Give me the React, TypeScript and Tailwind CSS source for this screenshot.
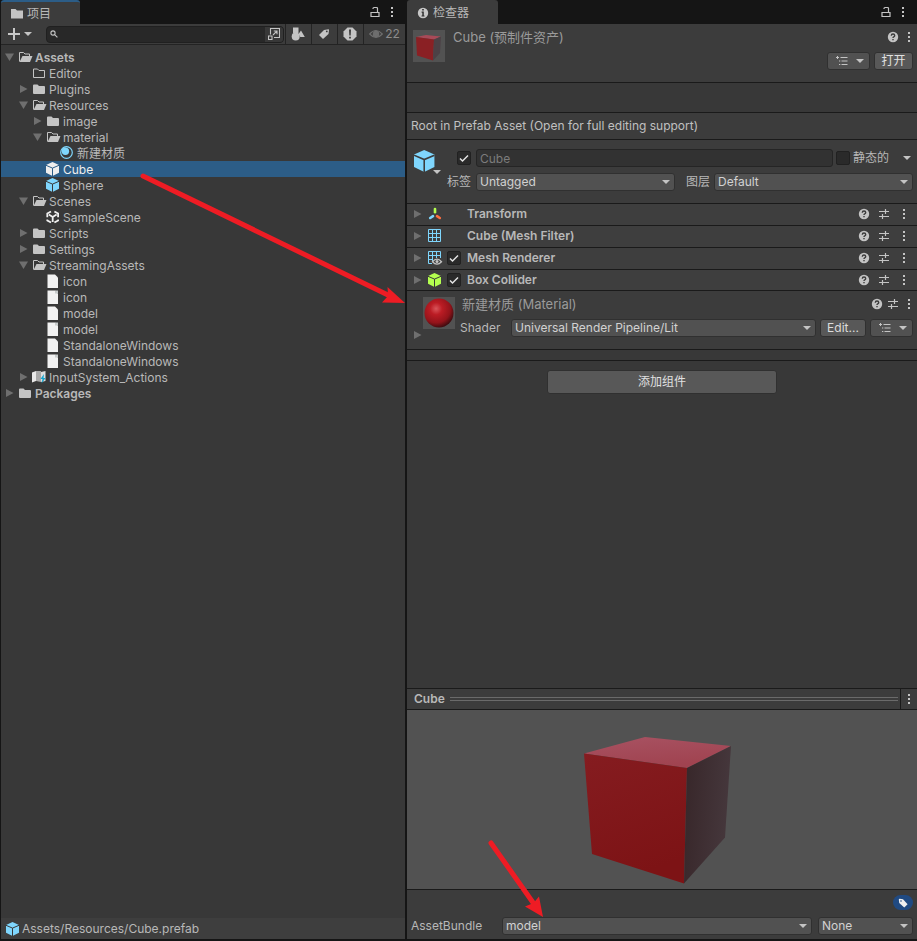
import type { ReactNode } from 'react';
import clsx from 'clsx';

type IconName = 'folder' | 'folderOpen' | 'folderEmpty' | 'material' | 'cube' | 'prefab' | 'scene' | 'file' | 'manifest' | 'input';

type TreeItem = {
  name: string;
  depth: number;
  icon: IconName;
  open?: boolean;
  selected?: boolean;
};

const tree: TreeItem[] = [
  { name: 'Assets', depth: 0, icon: 'folderOpen', open: true },
  { name: 'Editor', depth: 1, icon: 'folderEmpty' },
  { name: 'Plugins', depth: 1, icon: 'folder', open: false },
  { name: 'Resources', depth: 1, icon: 'folderOpen', open: true },
  { name: 'image', depth: 2, icon: 'folder', open: false },
  { name: 'material', depth: 2, icon: 'folderOpen', open: true },
  { name: '新建材质', depth: 3, icon: 'material' },
  { name: 'Cube', depth: 2, icon: 'cube', selected: true },
  { name: 'Sphere', depth: 2, icon: 'prefab' },
  { name: 'Scenes', depth: 1, icon: 'folderOpen', open: true },
  { name: 'SampleScene', depth: 2, icon: 'scene' },
  { name: 'Scripts', depth: 1, icon: 'folder', open: false },
  { name: 'Settings', depth: 1, icon: 'folder', open: false },
  { name: 'StreamingAssets', depth: 1, icon: 'folderOpen', open: true },
  { name: 'icon', depth: 2, icon: 'file' },
  { name: 'icon', depth: 2, icon: 'manifest' },
  { name: 'model', depth: 2, icon: 'file' },
  { name: 'model', depth: 2, icon: 'manifest' },
  { name: 'StandaloneWindows', depth: 2, icon: 'file' },
  { name: 'StandaloneWindows', depth: 2, icon: 'manifest' },
  { name: 'InputSystem_Actions', depth: 1, icon: 'input', open: false },
  { name: 'Packages', depth: 0, icon: 'folder', open: false },
];

function CubeIcon({ className, line = '#383838' }: { className?: string; line?: string }) {
  return (
    <svg viewBox="0 0 14 14" className={className}>
      <path d="M6.5 0 L13 2.9 V10.8 L6.5 14 L0 10.8 V2.9 Z" fill="currentColor" />
      <path d="M0 3.3 L6.5 6.1 L13 3.3 M6.5 6.1 V14" fill="none" stroke={line} strokeWidth="1" />
    </svg>
  );
}

function SceneIcon() {
  return (
    <svg viewBox="0 0 14 14" className="w-3.5 h-3.5" fill="none" stroke="#f0f0f0" strokeWidth="1.8">
      <path d="M5 1.4 L1.3 3.6 V7.2 M1.3 9.4 V10.4 L5 12.6 M8.4 12.6 L12.1 10.4 V9.4 M12.1 7.2 V3.6 L8.4 1.4" />
      <path d="M2.8 4.6 L6.7 7 L10.6 4.6 M6.7 7 V12" />
    </svg>
  );
}

function Foldout({ open }: { open: boolean }) {
  return (
    <svg viewBox="0 0 12 12" className="w-3 h-3 text-[#6f6f6f]">
      {open ? <path d="M1 2.5 H10 L5.5 10 Z" fill="currentColor" /> : <path d="M2 2 L9.5 6 L2 10 Z" fill="currentColor" />}
    </svg>
  );
}

function Caret({ className }: { className?: string }) {
  return (
    <svg viewBox="0 0 8 4" className={clsx('w-2 h-1 shrink-0 text-[#c4c4c4]', className)}>
      <path d="M0 0 H8 L4 4 Z" fill="currentColor" />
    </svg>
  );
}

function TreeIcon({ name }: { name: IconName }) {
  if (name === 'cube') return <CubeIcon className="w-3.5 h-3.5 text-[#eeeeee]" line="#2c5d87" />;
  if (name === 'prefab') return <CubeIcon className="w-3.5 h-3.5 text-[#7fd6fd]" />;
  if (name === 'scene') return <SceneIcon />;
  return (
    <svg viewBox="0 0 16 16" className="w-4 h-4 text-[#c4c4c4]">
      {name === 'folder' && <path d="M1 4.5 Q1 3.5 2 3.5 H5.5 L7 5 H12 Q13 5 13 6 V12 Q13 13 12 13 H2 Q1 13 1 12 Z" fill="currentColor" />}
      {name === 'folderEmpty' && <path d="M1.5 4 H5.5 L7 5.5 H12.5 V12.5 H1.5 Z" fill="none" stroke="currentColor" />}
      {name === 'folderOpen' && (
        <>
          <path d="M1.5 12.5 V3.5 H5.5 L7 5 H11.5 V7" fill="none" stroke="currentColor" />
          <path d="M4.5 7 H14.5 L12 13 H1.5 Z" fill="currentColor" />
        </>
      )}
      {name === 'material' && (
        <>
          <circle cx="6.5" cy="7.5" r="5.8" fill="none" stroke="#7fd6fd" strokeWidth="1.2" />
          <circle cx="5.4" cy="6.2" r="3.7" fill="#7fd6fd" />
        </>
      )}
      {(name === 'file' || name === 'manifest') && (
        <>
          <path d="M1.5 1.5 H9 L12 4.5 V15 H1.5 Z" fill="#f2f2f2" />
          {name === 'manifest' && <path d="M9 1.5 H12 V4.5 H9 Z" fill="#c8cccc" />}
        </>
      )}
      {name === 'input' && (
        <>
          <path d="M0 3.5 L4 2 V12 L0 13.5 Z" fill="#e8e8e8" />
          <path d="M4 2 H9 V13 L4 12 Z" fill="#a9a9a9" />
          <path d="M9 3 L13.5 2 V12 L9 13 Z" fill="#dedede" />
          <path d="M12 5 L8.5 10 H10.5 L9.5 14.5 L13.5 9 H11.5 Z" fill="#14a5cf" />
        </>
      )}
    </svg>
  );
}

function TreeRow({ item }: { item: TreeItem }) {
  const indent = 3 + item.depth * 14;
  return (
    <li className={clsx('flex items-center h-4', item.selected ? 'bg-[#2c5d87] text-[#eeeeee]' : '')} style={{ paddingLeft: indent }}>
      <button className="w-3.5 h-4 flex items-center shrink-0" aria-label={item.name} disabled={item.open === undefined}>
        {item.open !== undefined && <Foldout open={item.open} />}
      </button>
      <span className="w-4 h-4 flex items-center shrink-0">
        <TreeIcon name={item.icon} />
      </span>
      <span className={clsx('pl-px pt-0.5 whitespace-nowrap', item.depth === 0 && 'font-semibold')}>{item.name}</span>
    </li>
  );
}

function LockIcon() {
  return (
    <svg viewBox="0 0 10 12" className="w-2.5 h-3 text-[#c4c4c4]" fill="none" stroke="currentColor" strokeWidth="1.2">
      <path d="M1 6.5 H9 V10.5 H1 Z M7.5 6 V2.5 Q7.5 1.5 6.5 1.5 H4 Q3 1.5 3 2.5 V3" />
    </svg>
  );
}

function Kebab() {
  return (
    <svg viewBox="0 0 4 12" className="w-1 h-3 text-[#c4c4c4]">
      <path d="M1 1 H3 V3 H1 Z M1 5 H3 V7 H1 Z M1 9 H3 V11 H1 Z" fill="currentColor" />
    </svg>
  );
}

function HelpIcon() {
  return (
    <svg viewBox="0 0 12 12" className="w-3 h-3">
      <circle cx="6" cy="6" r="5.2" fill="#c4c4c4" />
      <path d="M4.3 4.7 Q4.3 3 6 3 Q7.7 3 7.7 4.5 Q7.7 5.4 6.7 5.8 Q6 6.1 6 7" fill="none" stroke="#3c3c3c" strokeWidth="1.4" />
      <path d="M5.3 8 H6.7 V9.3 H5.3 Z" fill="#3c3c3c" />
    </svg>
  );
}

function PresetIcon() {
  return (
    <svg viewBox="0 0 12 12" className="w-3 h-3 text-[#c4c4c4]" fill="none" stroke="currentColor" strokeWidth="1.2">
      <path d="M1 3.5 H7 M7.5 1 V6 M7.5 3.5 H11 M1 8.5 H4 M4.5 6 V11 M5 8.5 H11" />
    </svg>
  );
}

function HeaderIcons({ preset = false, className }: { preset?: boolean; className?: string }) {
  return (
    <div className={clsx('flex items-center shrink-0', className)}>
      <button aria-label="帮助"><HelpIcon /></button>
      {preset && <button aria-label="预设"><PresetIcon /></button>}
      <button aria-label="更多"><Kebab /></button>
    </div>
  );
}

function ListMenuButton() {
  return (
    <button aria-label="列表" className="h-[18px] w-[43px] shrink-0 flex items-center justify-between pl-2 pr-[5px] bg-[#515151] border border-[#303030] rounded-[3px]">
      <svg viewBox="0 0 12 10" className="w-3 h-2.5 text-[#c4c4c4]" fill="none" stroke="currentColor">
        <path d="M0 1.5 H3 M1.5 0 V3 M4.5 1.5 H11.5 M5.5 5 H11.5 M5.5 8.5 H11.5 M3 5 H4.3 M3 8.5 H4.3" />
      </svg>
      <Caret />
    </button>
  );
}

function Dropdown({ label, value, className }: { label: string; value: string; className?: string }) {
  return (
    <div className={clsx('relative flex items-center min-w-0', className)}>
      <select aria-label={label} defaultValue={value} className="appearance-none w-full h-[18px] pl-[3px] pr-4 leading-4 bg-[#515151] text-[#d2d2d2] border border-[#303030] rounded-[3px] outline-none">
        <option>{value}</option>
      </select>
      <Caret className="absolute right-[5px] pointer-events-none" />
    </div>
  );
}

function Checkbox({ label, checked = false }: { label: string; checked?: boolean }) {
  return (
    <span className="relative flex w-3.5 h-3.5 shrink-0">
      <input type="checkbox" aria-label={label} defaultChecked={checked} className="peer appearance-none w-3.5 h-3.5 bg-[#2a2a2a] border border-[#212121] rounded-[2px]" />
      <svg viewBox="0 0 14 14" className="absolute inset-0 hidden peer-checked:block pointer-events-none" fill="none" stroke="#e4e4e4" strokeWidth="1.5">
        <path d="M3 7.5 L5.5 10 L11 4.5" />
      </svg>
    </span>
  );
}

function TransformIcon() {
  return (
    <svg viewBox="0 0 14 14" className="w-3.5 h-3.5" fill="none" strokeWidth="2.6" strokeLinecap="round">
      <path d="M7 2 V5.2" stroke="#b4ff4f" />
      <path d="M5 9.2 L2.2 11" stroke="#7fd6fd" />
      <path d="M9 9.2 L11.8 11" stroke="#ff6e40" />
    </svg>
  );
}

function MeshIcon({ eye = false }: { eye?: boolean }) {
  return (
    <svg viewBox="0 0 14 14" className="w-3.5 h-3.5 overflow-visible" fill="none" stroke="#7fd6fd">
      {eye ? <path d="M4 12.5 H0.5 V0.5 H12.5 V7 M4.5 0.5 V10 M8.5 0.5 V7 M0.5 4.5 H12.5 M0.5 8.5 H5" /> : <path d="M0.5 0.5 H12.5 V12.5 H0.5 Z M4.5 0.5 V12.5 M8.5 0.5 V12.5 M0.5 4.5 H12.5 M0.5 8.5 H12.5" />}
      {eye && (
        <>
          <path d="M4.5 10.7 Q9 5.5 13.5 10.7 Q9 15.5 4.5 10.7 Z" stroke="#c4c4c4" strokeWidth="1.3" fill="#3c3c3c" />
          <circle cx="9" cy="10.6" r="1.5" fill="#c4c4c4" stroke="none" />
        </>
      )}
    </svg>
  );
}

function ComponentRow({ title, icon, toggle = false }: { title: string; icon: ReactNode; toggle?: boolean }) {
  return (
    <div className="h-[22px] last:h-[21px] flex items-center pl-[5px] pr-[11px] pb-px last:pb-0 bg-[#3e3e3e] border-b border-[#1a1a1a]">
      <button aria-label={title} className="w-4"><Foldout open={false} /></button>
      <span className="w-[19px]">{icon}</span>
      <span className="w-5">{toggle && <Checkbox label={title} checked />}</span>
      <h3 className="flex-1 font-semibold">{title}</h3>
      <HeaderIcons preset className="gap-2 [&>button:last-child]:ml-1" />
    </div>
  );
}

// annotation arrows, drawn over the panels
function Arrow({ className, viewBox, line, head }: { className: string; viewBox: string; line: string; head: string }) {
  return (
    <svg viewBox={viewBox} className={clsx('absolute pointer-events-none', className)}>
      <path d={line} stroke="#ee1c24" strokeWidth="5" strokeLinecap="round" />
      <path d={head} fill="#ee1c24" />
    </svg>
  );
}

function ProjectPanel() {
  return (
    <section className="flex flex-col min-w-0 bg-[#383838]">
      <div className="h-6 flex items-center bg-[#151515] pr-[11px]">
        <h2 className="h-6 w-[79px] flex items-center gap-0.5 pl-2 pt-0.5 bg-[#3c3c3c] border-t-2 border-[#2c5d87] rounded-t-[3px]">
          <svg viewBox="0 0 16 16" className="w-4 h-4 text-[#c4c4c4]">
            <path d="M2 3 H6.5 L8 4.5 H14 V12.5 H2 Z" fill="currentColor" />
          </svg>
          项目
        </h2>
        <div className="ml-auto flex items-center gap-2.5">
          <button aria-label="锁定"><LockIcon /></button>
          <button aria-label="更多"><Kebab /></button>
        </div>
      </div>
      <div className="h-[21px] flex items-center bg-[#3c3c3c] border-b border-[#232323]">
        <button aria-label="新建" className="w-[45px] flex items-center gap-1 pl-[7px]">
          <svg viewBox="0 0 12 12" className="w-3 h-3" stroke="#c8c8c8" strokeWidth="2">
            <path d="M6 0 V12 M0 6 H12" />
          </svg>
          <Caret />
        </button>
        <div className="flex-1 h-[17px] flex items-center min-w-0 bg-[#282828] border border-[#202020] rounded-[4px]">
          <svg viewBox="0 0 8 8" className="w-2 h-2 ml-[3px] shrink-0" fill="none" stroke="#c4c4c4" strokeWidth="1.1">
            <circle cx="3" cy="3" r="2.1" />
            <path d="M4.6 4.6 L7.4 7.4" />
          </svg>
          <input type="text" aria-label="搜索" className="flex-1 min-w-0 h-4 px-1 bg-transparent outline-none" />
          <button aria-label="搜索窗口" className="w-[18px] h-[15px] flex items-center justify-center bg-[#383838] rounded-r-[3px]">
            <svg viewBox="0 0 12 12" className="w-3 h-3" fill="none" stroke="#c4c4c4" strokeWidth="1.1">
              <path d="M2.5 6.5 V0.5 H11.5 V9.5 H6 M0.5 8 H4 V11.5 H0.5 Z M5 7 L8.8 3.2 M5.8 3 H9 V6.2" />
            </svg>
          </button>
        </div>
        <div className="ml-px h-5 flex shrink-0">
          <button aria-label="按类型搜索" className="w-[26px] flex items-center justify-center pr-0.5 border-l border-[#232323]">
            <svg viewBox="0 0 14 14" className="w-3.5 h-3.5 text-[#c4c4c4]" fill="currentColor">
              <path d="M2 0.5 H7.5 V6 H2 Z M10 3.5 L13.8 10 H9.3 L7.5 7 Z" />
              <circle cx="4.7" cy="9.5" r="4" />
            </svg>
          </button>
          <button aria-label="按标签搜索" className="w-[26px] flex items-center justify-center pr-0.5 border-l border-[#232323]">
            <svg viewBox="0 0 12 12" className="w-3 h-3">
              <path d="M6 2 L10.5 1.2 Q11 1.2 11 1.7 L10.5 6 L5 11 L1 7 Z" fill="#c4c4c4" />
              <circle cx="8.8" cy="3.4" r="0.9" fill="#3c3c3c" />
            </svg>
          </button>
          <button aria-label="错误" className="w-[26px] flex items-center justify-center pr-0.5 border-l border-[#232323]">
            <svg viewBox="0 0 14 14" className="w-3.5 h-3.5">
              <path d="M4.5 0.5 H9.5 L13.5 4.5 V9.5 L9.5 13.5 H4.5 L0.5 9.5 V4.5 Z" fill="#c4c4c4" />
              <path d="M6 2.5 H8 L7.7 8.5 H6.3 Z M6.1 9.8 H7.9 V11.5 H6.1 Z" fill="#3c3c3c" />
            </svg>
          </button>
          <button aria-label="隐藏的包" className="w-[42px] flex items-center justify-center gap-0.5 border-l border-[#232323] text-[#8c8c8c]">
            <svg viewBox="0 0 14 10" className="w-3.5 h-2.5" fill="none" stroke="#6e6e6e" strokeWidth="1.2">
              <path d="M0.7 5 Q7 -2 13.3 5 Q7 12 0.7 5 Z" />
              <circle cx="7" cy="5" r="2.7" fill="#6e6e6e" />
            </svg>
            22
          </button>
        </div>
      </div>
      <ul className="flex-1 pt-1">
        {tree.map((item, i) => <TreeRow key={i} item={item} />)}
      </ul>
      <footer className="h-[21px] flex items-center gap-0.5 pl-[5px] bg-[#3e3e3e]">
        <CubeIcon className="w-3.5 h-3.5 text-[#7fd6fd]" />
        <span>Assets/Resources/Cube.prefab</span>
      </footer>
    </section>
  );
}

function InspectorPanel() {
  return (
    <section className="flex flex-col min-w-0 bg-[#383838]">
      <div className="h-6 flex items-center bg-[#151515] pr-3">
        <h2 className="h-6 w-[91px] flex items-center gap-1 pl-2.5 pt-0.5 bg-[#3c3c3c] rounded-t-[3px]">
          <svg viewBox="0 0 12 12" className="w-3 h-3">
            <circle cx="6" cy="6" r="5.2" fill="#c8c8c8" />
            <path d="M5.2 2 H6.8 V3.6 H5.2 Z M4.6 4.6 H6.8 V8.4 H7.5 V9.6 H4.5 V8.4 H5.3 V5.7 H4.6 Z" fill="#303030" />
          </svg>
          检查器
        </h2>
        <div className="ml-auto flex items-center gap-2.5">
          <button aria-label="锁定"><LockIcon /></button>
          <button aria-label="更多"><Kebab /></button>
        </div>
      </div>

      <header className="h-[59px] flex pt-1.5 pl-1.5 bg-[#3c3c3c] border-b border-[#1a1a1a]">
        <svg viewBox="0 0 32 32" className="w-8 h-8 shrink-0 bg-[#525252]">
          <path d="M3 7 L13 5 L28 6.5 L21 9.5 Z" fill="#a84a58" />
          <path d="M3 7 L21 9.5 L20 30.5 L4 25.5 Z" fill="#8a2024" />
          <path d="M21 9.5 L28 6.5 L27 23 L20 30.5 Z" fill="#4c4146" />
        </svg>
        <div className="flex-1 flex flex-col pl-2">
          <div className="h-3.5 flex items-center justify-between pr-1.5">
            <h1 className="text-[13px] text-[#9a9a9a]">Cube (预制件资产)</h1>
            <HeaderIcons className="gap-2" />
          </div>
          <div className="mt-2 flex justify-end gap-1 pr-1">
            <ListMenuButton />
            <button className="h-[18px] w-[39px] bg-[#585858] border border-[#303030] rounded-[3px] leading-4 text-[#e0e0e0]">打开</button>
          </div>
        </div>
      </header>
      <div className="h-[30px] border-b border-[#1a1a1a]" />
      <p className="h-[27px] flex items-center pl-1 pb-px bg-[#3c3c3c] border-b border-[#1a1a1a] text-[#c0c0c0]">Root in Prefab Asset (Open for full editing support)</p>

      <div className="h-16 flex pt-[9px] pl-[7px] pr-1 bg-[#3c3c3c] border-b border-[#1a1a1a]">
        <button aria-label="图标" className="w-[33px] shrink-0 flex items-end self-start pt-px">
          <CubeIcon className="w-[22px] h-[22px] text-[#7fd6fd]" line="#3c3c3c" />
          <Caret className="-ml-[3px] -mb-0.5" />
        </button>
        <div className="flex-1 flex flex-col gap-1.5 min-w-0">
          <div className="flex items-center">
            <span className="w-[29px] pl-2.5"><Checkbox label="激活" checked /></span>
            <input type="text" aria-label="名称" defaultValue="Cube" disabled className="flex-1 min-w-0 h-[18px] pl-[3px] bg-[#323232] border border-[#252525] rounded-[3px] text-[#7c7c7c]" />
            <span className="w-20 flex items-center gap-[3px] pl-[3px] pr-0.5">
              <Checkbox label="静态的" />
              静态的
              <Caret className="ml-auto" />
            </span>
          </div>
          <div className="flex items-center">
            <span className="w-[29px]">标签</span>
            <Dropdown label="标签" value="Untagged" className="flex-1" />
            <span className="w-[39px] pl-[11px]">图层</span>
            <Dropdown label="图层" value="Default" className="flex-1" />
          </div>
        </div>
      </div>

      <div>
        <ComponentRow title="Transform" icon={<TransformIcon />} />
        <ComponentRow title="Cube (Mesh Filter)" icon={<MeshIcon />} />
        <ComponentRow title="Mesh Renderer" icon={<MeshIcon eye />} toggle />
        <ComponentRow title="Box Collider" icon={<CubeIcon className="w-3.5 h-3.5 text-[#b4ff4f]" />} toggle />
      </div>

      <div className="h-[59px] flex pt-1.5 pl-[5px] bg-[#3c3c3c] border-b border-[#1a1a1a]">
        <button aria-label="材质" className="self-end w-[11px] pb-2 shrink-0"><Foldout open={false} /></button>
        <svg viewBox="0 0 32 32" className="w-8 h-8 shrink-0 bg-[#525252]">
          <defs>
            <radialGradient id="ball" cx="0.4" cy="0.35" r="0.7">
              <stop offset="0" stopColor="#d9555a" />
              <stop offset="0.3" stopColor="#bb1c24" />
              <stop offset="0.7" stopColor="#93131a" />
              <stop offset="1" stopColor="#300a0d" />
            </radialGradient>
          </defs>
          <circle cx="16" cy="16" r="14.5" fill="url(#ball)" />
        </svg>
        <div className="flex-1 min-w-0 flex flex-col pl-[5px]">
          <div className="h-3.5 flex items-center justify-between pl-0.5 pr-1.5">
            <h3 className="text-[13px] text-[#9a9a9a]">新建材质 (Material)</h3>
            <HeaderIcons preset className="gap-1 [&>button:last-child]:ml-1" />
          </div>
          <div className="mt-2 flex items-center gap-1 pr-1">
            <span className="w-[47px]">Shader</span>
            <Dropdown label="Shader" value="Universal Render Pipeline/Lit" className="flex-1" />
            <button className="h-[18px] w-[46px] bg-[#585858] border border-[#303030] rounded-[3px] leading-4 text-[#dcdcdc]">Edit...</button>
            <ListMenuButton />
          </div>
        </div>
      </div>
      <div className="h-[11px] border-b border-[#1a1a1a]" />
      <div className="flex-1 pt-[9px] flex justify-center items-start">
        <button className="w-[230px] h-6 bg-[#585858] border border-[#303030] rounded-[3px] text-[#e0e0e0]">添加组件</button>
      </div>

      <div className="h-[22px] flex items-center bg-[#3c3c3c] border-y border-[#1a1a1a]">
        <h3 className="pl-[7px] pr-[5px] font-semibold">Cube</h3>
        <div className="flex-1 h-1 border-y border-[#6a6a6a] mr-0.5" />
        <button aria-label="更多" className="w-[17px] h-5 flex items-center justify-center border-l border-[#1a1a1a]"><Kebab /></button>
      </div>
      <div className="h-[179px] flex justify-center bg-[#525252]">
        <svg viewBox="0 0 150 179" className="w-[150px] overflow-visible">
          <defs>
            <linearGradient id="top" x1="0" y1="0" x2="0.3" y2="1">
              <stop offset="0" stopColor="#a85262" />
              <stop offset="1" stopColor="#a04350" />
            </linearGradient>
            <linearGradient id="front" x1="0" y1="0" x2="0.3" y2="1">
              <stop offset="0" stopColor="#851c20" />
              <stop offset="1" stopColor="#7d1315" />
            </linearGradient>
            <linearGradient id="side" x1="0" y1="0.3" x2="1" y2="0.5">
              <stop offset="0" stopColor="#38272a" />
              <stop offset="1" stopColor="#46383d" />
            </linearGradient>
          </defs>
          <path d="M-3 43.5 L58 27 L144 36 L100 58 Z" fill="url(#top)" />
          <path d="M-3 43.5 L100 58 L97 173.5 L5 144 Z" fill="url(#front)" />
          <path d="M100 58 L144 36 L138 127.5 L97 173.5 Z" fill="url(#side)" />
        </svg>
      </div>
      <footer className="h-[50px] bg-[#3c3c3c] border-t border-[#1a1a1a] pl-1 pr-1">
        <div className="flex justify-end pt-[5px]">
          <button aria-label="资源标签" className="w-5 h-[15px] flex items-center justify-center bg-[#204a82] rounded-full">
            <svg viewBox="0 0 12 12" className="w-2.5 h-2.5">
              <path d="M1 2 Q1 1 2 1 L6 1.5 L11.5 7.5 L7.5 11.5 L1.5 6 Z" fill="#f0f0f0" />
              <circle cx="3.6" cy="3.6" r="1" fill="#204a82" />
            </svg>
          </button>
        </div>
        <div className="mt-[7px] flex items-center">
          <span className="w-[91px]">AssetBundle</span>
          <Dropdown label="AssetBundle" value="model" className="flex-1" />
          <Dropdown label="Variant" value="None" className="ml-1.5 w-[95px]" />
        </div>
      </footer>
    </section>
  );
}

export default function App() {
  return (
    <main className="relative min-h-screen grid grid-cols-[404fr_510fr] gap-0.5 pl-px pb-0.5 bg-[#151515] text-[#b8b8b8] text-[12px] leading-4 font-['Inter','Noto_Sans_CJK_SC',sans-serif]">
      <ProjectPanel />
      <InspectorPanel />
      <Arrow
        className="left-[136px] top-[168px] w-[272px] h-[140px]"
        viewBox="136 168 272 140"
        line="M143 176 L390 296"
        head="M405 303 L382 302.5 L388 296 L387.5 287 Z"
      />
      <Arrow
        className="left-[484px] bottom-[20px] w-[64px] h-[84px]"
        viewBox="484 837 64 84"
        line="M491 843 L534 904"
        head="M543 917 L525 906.5 L533.5 903 L539 896.5 Z"
      />
    </main>
  );
}
